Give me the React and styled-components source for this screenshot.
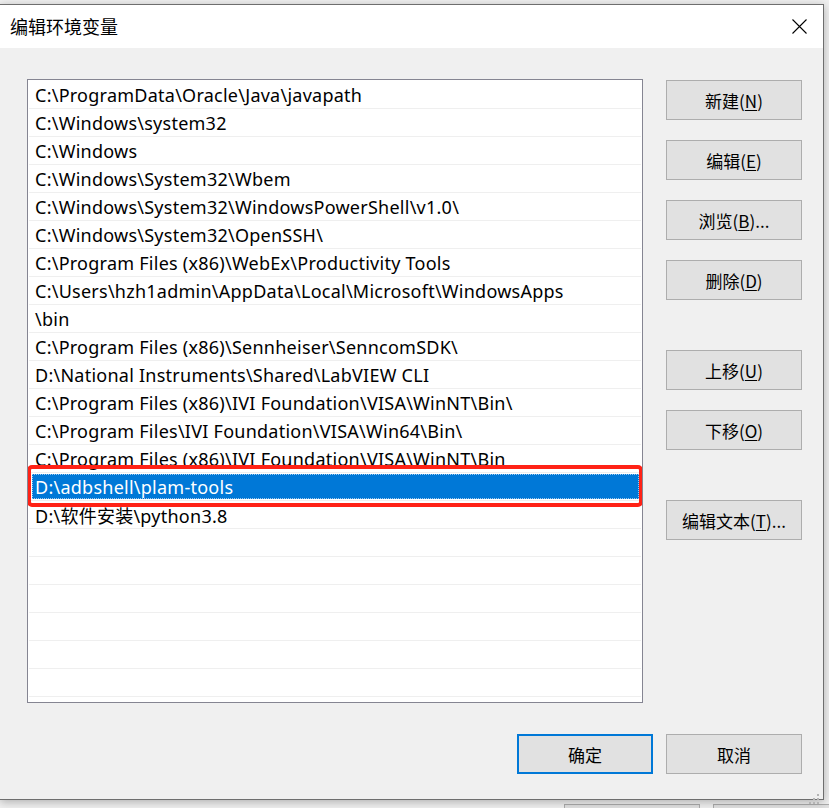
import React from "react";
import styled, { createGlobalStyle } from "styled-components";

const GlobalStyle = createGlobalStyle`
  html, body { margin: 0; padding: 0; }
  body {
    background: #e4e4e4;
    font-family: "Noto Sans CJK SC", "Noto Sans", sans-serif;
    color: #000;
  }
`;

const Desktop = styled.div`
  position: relative;
  width: 829px;
  height: 808px;
  overflow: hidden;
  background: #e4e4e4;
`;

/* the window behind the dialog: only its right edge and footer peek out */
const BackWindow = styled.div`
  position: absolute;
  left: 0;
  top: 0;
  width: 829px;
  height: 808px;
  background: #f0f0f0;
  display: grid;
  grid-template-rows: 804px 1fr;
`;

const BackPane = styled.div`
  display: flex;
  justify-content: flex-end;
`;

const BackStrip = styled.div`
  width: 5px;
  display: flex;
  flex-direction: column;
`;

const StripSeg = styled.div`
  height: ${(p) => p.$h}px;
  background: ${(p) => p.$bg || "#f0f0f0"};
  border-bottom: 1px solid ${(p) => p.$line || "transparent"};
`;

const BackFooter = styled.div`
  display: flex;
  gap: 13px;
  padding-left: 564px;
`;

const BackButton = styled.div`
  width: 136px;
  height: 30px;
  box-sizing: border-box;
  border: 1px solid #adadad;
  background: #e1e1e1;
`;

const Dialog = styled.div`
  position: absolute;
  left: 0;
  top: 4px;
  width: 824px;
  height: 796px;
  box-sizing: border-box;
  border: 1px solid #6e6e6e;
  border-left: none;
  background: #f0f0f0;
  box-shadow: 0 2px 9px rgba(0, 0, 0, 0.28);
  display: flex;
  flex-direction: column;
`;

const TitleBar = styled.div`
  height: 43px;
  flex: none;
  background: #fff;
  display: flex;
  align-items: center;
  justify-content: space-between;
  padding: 0 16px 0 10px;
`;

const Title = styled.span`
  font-size: 18px;
  line-height: 1;
  margin-top: -1px;
`;

const CloseButton = styled.div`
  width: 15px;
  height: 15px;
  display: flex;
  align-items: center;
  justify-content: center;
  margin-top: -1px;
`;

const Body = styled.div`
  flex: 1;
  position: relative;
  display: flex;
  flex-direction: column;
  padding: 31px 21px 0 27px;
`;

const MainRow = styled.div`
  display: flex;
  gap: 23px;
`;

const ListBox = styled.div`
  position: relative;
  width: 616px;
  height: 624px;
  box-sizing: border-box;
  border: 1px solid #858592;
  background: #fff;
  padding: 1px 1px 0;
  overflow: hidden;
`;

const Row = styled.div`
  height: 28px;
  box-sizing: border-box;
  border-bottom: 1px solid #efefef;
  display: flex;
  align-items: stretch;
`;

const RowText = styled.div`
  flex: 1;
  display: flex;
  align-items: center;
  font-family: "Noto Sans", "Noto Sans CJK SC", sans-serif;
  font-size: 18px;
  letter-spacing: 0.25px;
  white-space: nowrap;
  padding-left: 6px;
  ${(p) =>
    p.$selected &&
    `
    margin: 1px 2px 1px 3px;
    padding-left: 3px;
    background: #0078d7;
    color: #fff;
    outline: 1px dotted #9cc8ef;
    outline-offset: -1px;
  `}
`;

const Highlight = styled.div`
  position: absolute;
  left: -1px;
  top: 385px;
  width: 616px;
  height: 42px;
  box-sizing: border-box;
  border: 4px solid #ff2216;
  border-radius: 5px;
  pointer-events: none;
`;

const SideButtons = styled.div`
  display: flex;
  flex-direction: column;
  padding-top: 1px;
`;

const Button = styled.div`
  width: 136px;
  height: 40px;
  box-sizing: border-box;
  border: ${(p) => (p.$default ? "2px solid #0078d7" : "1px solid #adadad")};
  background: #e1e1e1;
  display: flex;
  align-items: center;
  justify-content: center;
  font-size: 17px;
  white-space: nowrap;
  margin-top: ${(p) => p.$gap ?? 0}px;
  u {
    text-decoration-thickness: 1px;
    text-underline-offset: 2px;
  }
`;

const Footer = styled.div`
  display: flex;
  justify-content: flex-end;
  gap: 13px;
  margin-top: 31px;
`;

const Grip = styled.div`
  position: absolute;
  right: 3px;
  bottom: 2px;
  width: 11px;
  height: 11px;
`;

const paths = [
  "C:\\ProgramData\\Oracle\\Java\\javapath",
  "C:\\Windows\\system32",
  "C:\\Windows",
  "C:\\Windows\\System32\\Wbem",
  "C:\\Windows\\System32\\WindowsPowerShell\\v1.0\\",
  "C:\\Windows\\System32\\OpenSSH\\",
  "C:\\Program Files (x86)\\WebEx\\Productivity Tools",
  "C:\\Users\\hzh1admin\\AppData\\Local\\Microsoft\\WindowsApps",
  "\\bin",
  "C:\\Program Files (x86)\\Sennheiser\\SenncomSDK\\",
  "D:\\National Instruments\\Shared\\LabVIEW CLI",
  "C:\\Program Files (x86)\\IVI Foundation\\VISA\\WinNT\\Bin\\",
  "C:\\Program Files\\IVI Foundation\\VISA\\Win64\\Bin\\",
  "C:\\Program Files (x86)\\IVI Foundation\\VISA\\WinNT\\Bin",
  "D:\\adbshell\\plam-tools",
  "D:\\软件安装\\python3.8",
  "", "", "", "", "", "", "",
];

const SELECTED = 14;

const sideButtons = [
  { label: "新建", key: "N", gap: 0 },
  { label: "编辑", key: "E", gap: 20 },
  { label: "浏览", key: "B", gap: 20, dots: true },
  { label: "删除", key: "D", gap: 20 },
  { label: "上移", key: "U", gap: 50 },
  { label: "下移", key: "O", gap: 20 },
  { label: "编辑文本", key: "T", gap: 50, dots: true },
];

const strip = [
  { h: 30, line: "#8a8a8a" },
  { h: 57 },
  { h: 28, bg: "#c9c9c9" },
  { h: 188, line: "#7a7a7a" },
  { h: 23, line: "#d0d0d0" },
  { h: 39, bg: "#e6e6e6", line: "#7a7a7a" },
  { h: 24, line: "#d0d0d0" },
  { h: 27, line: "#d0d0d0" },
  { h: 26, line: "#7a7a7a" },
];

const Label = ({ label, k, dots }) => (
  <span>
    {label}(<u>{k}</u>){dots ? "..." : ""}
  </span>
);

export default function App() {
  return (
    <>
      <GlobalStyle />
      <Desktop>
        <BackWindow>
          <BackPane>
            <BackStrip>
              {strip.map((s, i) => (
                <StripSeg key={i} $h={s.h} $bg={s.bg} $line={s.line} />
              ))}
            </BackStrip>
          </BackPane>
          <BackFooter>
            <BackButton />
            <BackButton />
          </BackFooter>
        </BackWindow>

        <Dialog>
          <TitleBar>
            <Title>编辑环境变量</Title>
            <CloseButton>
              <svg width="15" height="15" viewBox="0 0 15 15">
                <path d="M0.5 0.5 L14.5 14.5 M14.5 0.5 L0.5 14.5" stroke="#000" strokeWidth="1.1" />
              </svg>
            </CloseButton>
          </TitleBar>

          <Body>
            <MainRow>
              <ListBox>
                {paths.map((p, i) => (
                  <Row key={i}>
                    <RowText $selected={i === SELECTED}>{p}</RowText>
                  </Row>
                ))}
                <Highlight />
              </ListBox>

              <SideButtons>
                {sideButtons.map((b) => (
                  <Button key={b.key} $gap={b.gap}>
                    <Label label={b.label} k={b.key} dots={b.dots} />
                  </Button>
                ))}
              </SideButtons>
            </MainRow>

            <Footer>
              <Button $default>确定</Button>
              <Button>取消</Button>
            </Footer>

            <Grip>
              <svg width="11" height="11" viewBox="0 0 11 11" fill="#b4b4b4">
                <rect x="8" y="0" width="2" height="2" />
                <rect x="4" y="4" width="2" height="2" />
                <rect x="8" y="4" width="2" height="2" />
                <rect x="0" y="8" width="2" height="2" />
                <rect x="4" y="8" width="2" height="2" />
                <rect x="8" y="8" width="2" height="2" />
              </svg>
            </Grip>
          </Body>
        </Dialog>
      </Desktop>
    </>
  );
}
